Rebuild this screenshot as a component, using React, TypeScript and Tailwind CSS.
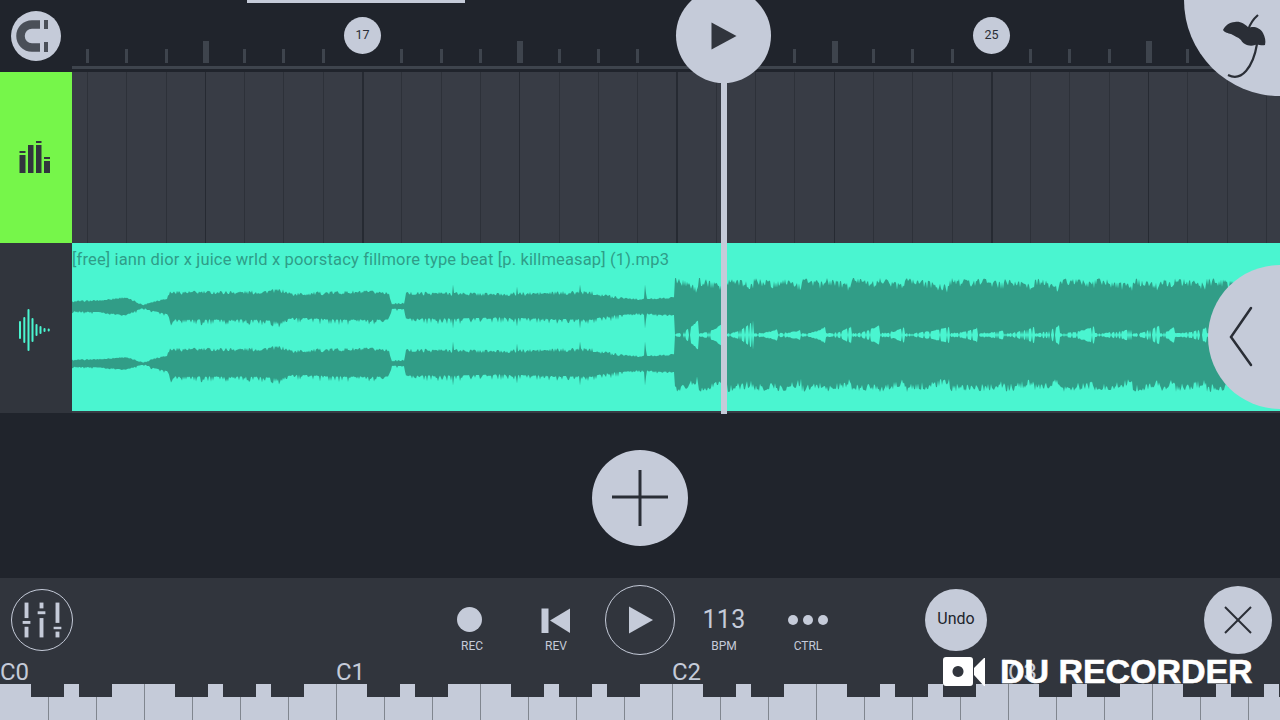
import React from "react";

const CELL_COUNT = 31;
const cells = Array.from({ length: CELL_COUNT }, (_, i) => i);

function rnd(n: number) {
  const s = Math.sin(n * 127.1 + 311.7) * 43758.5453;
  return s - Math.floor(s);
}

function interp(points: number[][], x: number) {
  for (let i = 1; i < points.length; i++) {
    if (x <= points[i][0]) {
      const [x0, y0] = points[i - 1];
      const [x1, y1] = points[i];
      return y0 + ((y1 - y0) * (x - x0)) / (x1 - x0);
    }
  }
  return points[points.length - 1][1];
}

const ENV = [
  [72, 5], [100, 6], [125, 9], [135, 5], [143, 1.5], [150, 4], [167, 8], [170, 14], [257, 14], [280, 16],
  [293, 12], [340, 14], [388, 14], [392, 2.5], [404, 3], [406, 13], [450, 13], [500, 12], [590, 14], [610, 10],
  [640, 7], [675, 9],
];
const SPIKES: Record<number, number> = { 453: 22, 517: 20, 580: 22, 645: 22 };
const SEGS = [675, 699, 727, 754, 778, 802, 826, 852, 880, 905, 950, 978, 1005, 1035, 1060, 1095, 1133, 1160, 1175, 1207, 1240, 1281];

function buildWave() {
  const a: string[] = [];
  const b: string[] = [];
  const c: string[] = [];
  const d: string[] = [];
  for (let x = 72; x <= 1280; x++) {
    let ut, ub, lt, lb;
    if (x < 675) {
      const e = interp(ENV, x);
      const sp = Math.max(SPIKES[x] || 0, SPIKES[x - 1] ? SPIKES[x - 1] * 0.6 : 0);
      const f = e > 9 ? 1 : 0.4;
      const up = Math.max(e + (rnd(x) - 0.5) * 4 * f, sp);
      const dn = Math.max(e + Math.pow(rnd(x + 500), 3) * 6 * f - f, sp);
      const lf = x < 150 ? 0.7 : 1;
      ut = 306.5 - up;
      ub = 306.5 + dn;
      lt = 363.5 - Math.max(up * lf, sp * 0.8);
      lb = 363.5 + Math.max(dn * lf, sp * 0.8);
    } else {
      let s = 0;
      while (SEGS[s + 1] <= x) s++;
      const t = (x - SEGS[s]) / (SEGS[s + 1] - SEGS[s]);
      const dec = 0.35 + rnd(s * 7 + 3) * 0.65;
      const outer = (s < 3 ? 12 : 8) * dec * Math.pow(t, 1.5);
      const big = s < 3 ? 14 : 3 + rnd(s * 5 + 1) * 6;
      const spike = rnd(x + 90) > 0.82;
      const gap = spike ? 0 : 1 + big * t * t + rnd(x + 90) * 1.5;
      ut = 278 + outer + Math.pow(rnd(x), 1.5) * 8;
      lb = 392 - outer - Math.pow(rnd(x + 200), 1.5) * 8;
      ub = 335 - gap;
      lt = 335 + gap;
    }
    a.push(`${x},${ut.toFixed(1)}`);
    b.unshift(`${x},${ub.toFixed(1)}`);
    c.push(`${x},${lt.toFixed(1)}`);
    d.unshift(`${x},${lb.toFixed(1)}`);
  }
  return [a.concat(b).join(" "), c.concat(d).join(" ")];
}

const [waveUpper, waveLower] = buildWave();

function Grid() {
  return (
    <div className="flex flex-1 overflow-hidden bg-[#383c45] pl-[15px]">
      {cells.map((i) => (
        <div
          key={i}
          className={
            i % 8 === 7
              ? "h-full w-[39.3px] shrink-0 border-l-2 border-[#262a32]"
              : i % 8 === 3
                ? "h-full w-[39.3px] shrink-0 border-l border-[#262a32]"
                : "h-full w-[39.3px] shrink-0 border-l border-[#2d3139]"
          }
        />
      ))}
    </div>
  );
}

function Ruler() {
  return (
    <div className="relative flex h-full flex-1 flex-col justify-end overflow-hidden pb-[3px]">
      <div className="flex h-[23px] items-end pb-[3px] pl-[14px]">
        {cells.map((i) => (
          <div key={i} className="flex h-full w-[39.3px] shrink-0 items-end">
            {i % 8 === 3 ? (
              <div className="-ml-[1px] h-[22px] w-[6px] bg-[#3e444d]" />
            ) : i % 8 === 7 ? null : (
              <div className="h-[14px] w-[3px] bg-[#3e444d]" />
            )}
          </div>
        ))}
      </div>
      <div className="h-[3px] bg-[#3e444d]" />
    </div>
  );
}

function Bubble({ label, left }: { label: string; left: string }) {
  return (
    <div
      className={`absolute top-[17px] flex h-[37px] w-[37px] items-center justify-center rounded-full bg-[#c5cbd9] text-[12.5px] text-[#2a2e36] ${left}`}
    >
      {label}
    </div>
  );
}

function TransportCol({ label, children }: { label: string; children: React.ReactNode }) {
  return (
    <div className="flex h-[68px] flex-col items-center pt-[21px]">
      <div className="flex h-[26px] items-center justify-center">{children}</div>
      <div className="mt-[6px] text-[12px] leading-[14px] text-[#c5cbd9]">{label}</div>
    </div>
  );
}

const BLACK_KEYS = [31, 79, 175, 223, 271, 367, 415, 511, 559, 607, 703, 751, 847, 895, 943, 1039, 1087, 1183, 1231, 1279];
const BLACK_LEFT = [
  "left-[31px]", "left-[79px]", "left-[175px]", "left-[223px]", "left-[271px]",
  "left-[367px]", "left-[415px]", "left-[511px]", "left-[559px]", "left-[607px]",
  "left-[703px]", "left-[751px]", "left-[847px]", "left-[895px]", "left-[943px]",
  "left-[1039px]", "left-[1087px]", "left-[1183px]", "left-[1231px]", "left-[1279px]",
];

function Piano() {
  return (
    <div className="relative flex h-[36px] overflow-hidden bg-[#c5cbd9]">
      {Array.from({ length: 27 }, (_, i) => (
        <div key={i} className={i === 0 ? "h-full w-[48px] shrink-0" : "h-full w-[48px] shrink-0 border-l border-[#80868f]"} />
      ))}
      {BLACK_KEYS.map((k, i) => (
        <div key={k} className={`absolute top-0 h-[13px] w-[33px] bg-[#31353d] ${BLACK_LEFT[i]}`} />
      ))}
    </div>
  );
}

export default function App() {
  return (
    <div className="relative flex h-[720px] w-[1280px] flex-col overflow-hidden bg-[#20242c] font-['Roboto',sans-serif]">
      {/* header */}
      <div className="flex h-[72px] shrink-0">
        <div className="flex w-[72px] shrink-0 items-center justify-start pl-[11px]">
          <div className="h-[50px] w-[50px] rounded-full bg-[#c5cbd9]">
            <svg width="50" height="50" viewBox="0 0 50 50">
              <path d="M29 13.5 H21 a11.5 11.5 0 0 0 0 23 H29" fill="none" stroke="#4a4f58" strokeWidth="8.5" />
              <rect x="33" y="9" width="4" height="9" fill="#4a4f58" />
              <rect x="33" y="31" width="4" height="10" fill="#4a4f58" />
            </svg>
          </div>
        </div>
        <Ruler />
      </div>

      {/* track 1 */}
      <div className="flex h-[171px] shrink-0">
        <div className="flex w-[72px] shrink-0 items-center justify-center bg-[#76f64a]">
          <svg width="72" height="171" viewBox="0 72 72 171" fill="#31353d">
            <rect x="19.5" y="155" width="6" height="18" />
            <rect x="19.5" y="151" width="6" height="2" />
            <rect x="28" y="147" width="5.5" height="26" />
            <rect x="28" y="145" width="5.5" height="2" />
            <rect x="36" y="145" width="5.5" height="28" />
            <rect x="36" y="141" width="5.5" height="2" />
            <rect x="44" y="161" width="6" height="12" />
            <rect x="44" y="157" width="6" height="2" />
          </svg>
        </div>
        <Grid />
      </div>

      {/* track 2 */}
      <div className="flex h-[170px] shrink-0">
        <div className="flex w-[72px] shrink-0 items-center justify-center bg-[#31353d]">
          <svg width="72" height="170" viewBox="0 243 72 170" stroke="#4af5d0" strokeWidth="2" strokeLinecap="round">
            <line x1="20" y1="322" x2="20" y2="338" />
            <line x1="24.3" y1="318" x2="24.3" y2="342" />
            <line x1="28.5" y1="310" x2="28.5" y2="350" />
            <line x1="32.5" y1="319" x2="32.5" y2="341" />
            <line x1="36.5" y1="325" x2="36.5" y2="335" />
            <line x1="40.5" y1="327" x2="40.5" y2="333" />
            <line x1="44.5" y1="329" x2="44.5" y2="331" />
            <line x1="48.7" y1="329.6" x2="48.7" y2="330.4" />
          </svg>
        </div>
        <div className="relative flex flex-1 flex-col overflow-hidden bg-[#383c45]">
          <div className="relative h-[168px] bg-[#4af5d0]">
            <svg className="absolute inset-0" width="1208" height="168" viewBox="72 243 1208 168" fill="#319d87">
              <polygon points={waveUpper} />
              <polygon points={waveLower} />
            </svg>
            <div className="absolute left-0 top-[7px] whitespace-nowrap text-[16.5px] leading-5 tracking-[0.15px] text-[#2f9d88]">
              [free] iann dior x juice wrld x poorstacy fillmore type beat [p. killmeasap] (1).mp3
            </div>
          </div>
        </div>
      </div>

      {/* add area */}
      <div className="flex flex-1 items-start justify-center pt-[37px]">
        <div className="flex h-[96px] w-[96px] items-center justify-center rounded-full bg-[#c5cbd9]">
          <svg width="58" height="58" viewBox="0 0 58 58" stroke="#2a2e36" strokeWidth="3">
            <line x1="29" y1="1" x2="29" y2="57" />
            <line x1="1" y1="28" x2="57" y2="28" />
          </svg>
        </div>
      </div>

      {/* bottom panel */}
      <div className="flex h-[142px] shrink-0 flex-col bg-[#31353d]">
        <div className="flex h-[76px] items-start pt-[8px]">
          <div className="ml-[11px] mt-[3px] flex h-[62px] w-[62px] items-center justify-center rounded-full border border-[#c5cbd9]">
            <svg width="62" height="62" viewBox="11 589 62 62" fill="#c5cbd9">
              <rect x="24" y="602" width="4" height="16" />
              <rect x="22" y="621" width="8" height="3" />
              <rect x="24" y="627" width="4" height="11" />
              <rect x="39.5" y="602" width="4" height="6" />
              <rect x="37.5" y="611" width="8" height="3" />
              <rect x="39.5" y="618" width="4" height="20" />
              <rect x="56" y="602" width="4" height="21" />
              <rect x="54" y="627" width="8" height="2.5" />
              <rect x="56" y="632" width="4" height="6" />
            </svg>
          </div>
          <div className="ml-[356px] w-[86px]">
            <TransportCol label="REC">
              <div className="-ml-[6px] -mt-[1px] h-[25px] w-[25px] rounded-full bg-[#c5cbd9]" />
            </TransportCol>
          </div>
          <div className="-ml-[1px] w-[84px]">
            <TransportCol label="REV">
              <svg width="30" height="25" viewBox="0 0 30 25" fill="#c5cbd9">
                <rect x="0.5" y="0.5" width="7" height="24.5" />
                <polygon points="9,12.5 29,0.5 29,25" />
              </svg>
            </TransportCol>
          </div>
          <div className="ml-[7px] flex h-[70px] w-[70px] shrink-0 items-center justify-center rounded-full border border-[#c5cbd9] -mt-[1px]">
            <svg width="26" height="28" viewBox="0 0 26 28" fill="#c5cbd9" className="ml-[2px]">
              <polygon points="1,0.5 25,14 1,27.5" />
            </svg>
          </div>
          <div className="ml-[7px] w-[84px]">
            <TransportCol label="BPM">
              <span className="-mt-[1px] text-[25px] leading-[26px] tracking-[0.3px] text-[#c5cbd9]">113</span>
            </TransportCol>
          </div>
          <div className="w-[84px]">
            <TransportCol label="CTRL">
              <div className="flex gap-[5px]">
                <div className="h-[10px] w-[10px] rounded-full bg-[#c5cbd9]" />
                <div className="h-[10px] w-[10px] rounded-full bg-[#c5cbd9]" />
                <div className="h-[10px] w-[10px] rounded-full bg-[#c5cbd9]" />
              </div>
            </TransportCol>
          </div>
          <div className="ml-[75px] mt-[3px] flex h-[62px] w-[62px] items-center justify-center rounded-full bg-[#c5cbd9] pb-[2px] text-[16px] text-[#20242c]">
            Undo
          </div>
          <div className="ml-[217px] flex h-[68px] w-[68px] items-center justify-center rounded-full bg-[#c5cbd9]">
            <svg width="28" height="28" viewBox="0 0 28 28" stroke="#2a2e36" strokeWidth="2" className="-ml-[1px]">
              <line x1="1" y1="1" x2="27" y2="27" />
              <line x1="27" y1="1" x2="1" y2="27" />
            </svg>
          </div>
        </div>
        <div className="flex h-[30px] text-[24px] leading-[36px] text-[#c5cbd9]">
          <div className="w-[336px]">C0</div>
          <div className="w-[336px]">C1</div>
          <div className="w-[336px]">C2</div>
          <div className="w-[272px]">C3</div>
        </div>
        <Piano />
      </div>

      {/* overlays */}
      <div className="absolute left-[247px] top-0 h-[3px] w-[218px] bg-[#c5cbd9]" />
      <Bubble label="17" left="left-[344px]" />
      <Bubble label="25" left="left-[973px]" />

      <div className="absolute left-[720.5px] top-[80px] h-[334px] w-[6px] bg-[#c5cbd9]" />
      <div className="absolute left-[676px] top-[-12px] flex h-[95px] w-[95px] items-center justify-center rounded-full bg-[#c5cbd9]">
        <svg width="26" height="28" viewBox="0 0 26 28" fill="#31353d" className="mt-[1px]">
          <polygon points="0.5,0.5 25.5,14 0.5,27.5" />
        </svg>
      </div>

      <div className="absolute right-0 top-0 h-[96px] w-[96px] rounded-bl-full bg-[#c5cbd9]">
        <svg width="96" height="96" viewBox="1184 0 96 96">
          <path
            d="M1223 30 C1225 26 1229 22 1235 22 C1240 21 1245 24 1249 28 C1252 26 1260 27 1263 33 C1265 37 1266 41 1265 45 C1261 46 1258 44 1255 45 C1249 47 1243 44 1241 40 C1238 37 1234 36 1231 34 C1228 33 1225 33 1223 30 Z"
            fill="#2a2e36"
          />
          <path d="M1258 15 Q1251 21 1248 30" fill="none" stroke="#2a2e36" strokeWidth="2.2" />
          <path d="M1257 44 Q1254 62 1246 71 Q1238 80 1228 75" fill="none" stroke="#2a2e36" strokeWidth="2.2" />
        </svg>
      </div>

      <div className="absolute right-0 top-[265px] h-[144px] w-[72px] rounded-l-full bg-[#c5cbd9]">
        <svg width="72" height="144" viewBox="1208 265 72 144">
          <path d="M1251 308 L1231 337 L1251 365" fill="none" stroke="#2a2e36" strokeWidth="2.5" strokeLinecap="round" />
        </svg>
      </div>

      {/* DU Recorder watermark */}
      <div className="absolute left-[943px] top-[655px] flex items-center">
        <svg width="42" height="31" viewBox="0 0 42 31" fill="#ffffff">
          <path
            fillRule="evenodd"
            d="M3 1 H27 a3 3 0 0 1 3 3 V27 a3 3 0 0 1 -3 3 H3 a3 3 0 0 1 -3 -3 V4 a3 3 0 0 1 3 -3 Z M15 10 a5.5 5.5 0 1 0 0.01 0 Z"
          />
          <polygon points="31,12 41,2 42,2 42,30 41,30 31,19" />
        </svg>
        <span className="ml-[15px] whitespace-nowrap font-['Liberation_Sans',sans-serif] text-[34px] font-bold leading-[32px] tracking-[-0.05px] text-white [-webkit-text-stroke:0.6px_white]">
          DU RECORDER
        </span>
      </div>
    </div>
  );
}
